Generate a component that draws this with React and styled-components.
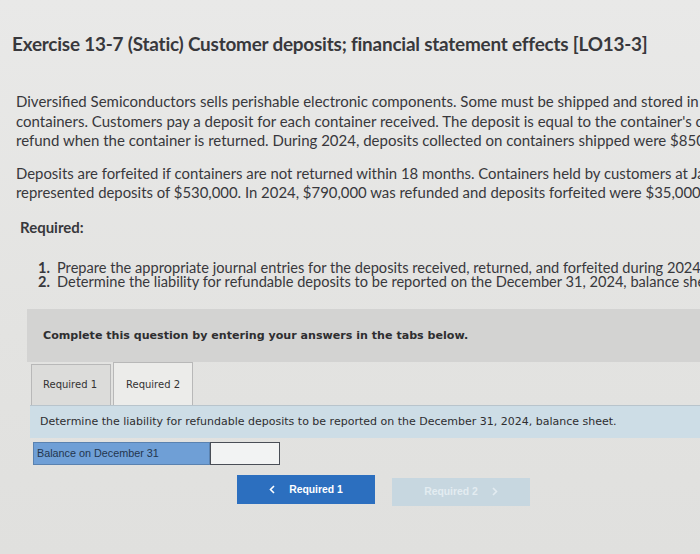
import React from "react";
import styled, { createGlobalStyle } from "styled-components";

const GlobalStyle = createGlobalStyle`
  html, body {
    margin: 0;
    padding: 0;
    width: 700px;
    height: 554px;
    overflow: hidden;
    background: #e4e4e2;
  }
`;

const Page = styled.div`
  width: 700px;
  height: 554px;
  overflow: hidden;
  background: linear-gradient(180deg, #e9e9e8 0%, #e3e3e1 60%, #e0e0de 100%);
  color: #38383c;
  font-family: Lato, "Liberation Sans", sans-serif;
  padding-top: 31px;
  box-sizing: border-box;
`;

const Title = styled.h1`
  margin: 0 0 0 12px;
  font-size: 18.9px;
  line-height: 26px;
  font-weight: 700;
  white-space: nowrap;
  letter-spacing: -0.2px;
`;

const Paragraph = styled.div`
  margin: ${(p) => p.$top}px 0 0 16px;
  font-size: ${(p) => p.$size}px;
  line-height: 19.5px;
`;

const Line = styled.div`
  white-space: nowrap;
`;

const Required = styled.div`
  margin: 15px 0 0 20px;
  font-size: 15px;
  line-height: 19px;
  font-weight: 700;
`;

const List = styled.ol`
  margin: 24px 0 0 0;
  padding: 0 0 0 38px;
  list-style: none;
  font-size: 14.6px;
  line-height: 14.5px;
`;

const Item = styled.li`
  display: flex;
  white-space: nowrap;
`;

const Num = styled.span`
  width: 19px;
  font-weight: 700;
  flex: none;
`;

const Panel = styled.div`
  margin: 19px 0 0 27px;
  font-family: "DejaVu Sans", Verdana, sans-serif;
`;

const Banner = styled.div`
  height: 53px;
  background: #d3d3d2;
  display: flex;
  align-items: center;
  padding-left: 16px;
  font-size: 11.1px;
  font-weight: 700;
  color: #2e2e30;
`;

const Tabs = styled.div`
  display: flex;
  gap: 2px;
  padding-left: 4px;
  height: 43px;
  align-items: flex-end;
`;

const Tab = styled.div`
  width: 80px;
  height: ${(p) => (p.$active ? 43 : 41)}px;
  box-sizing: border-box;
  border: 1px solid #b8b8b8;
  border-bottom: none;
  background: ${(p) => (p.$active ? "#ececea" : "#dcdcda")};
  display: flex;
  align-items: center;
  padding-left: ${(p) => (p.$active ? 12 : 11)}px;
  padding-top: ${(p) => (p.$active ? 2 : 0)}px;
  font-size: 10px;
  color: #333;
`;

const Prompt = styled.div`
  margin-left: 3px;
  height: 32px;
  background: #cddde6;
  border-top: 1px solid #b8c4cc;
  display: flex;
  align-items: center;
  padding-left: 10px;
  font-size: 11px;
  color: #2e2e30;
  white-space: nowrap;
`;

const AnswerRow = styled.div`
  display: flex;
  margin: 4px 0 0 6px;
  height: 23px;
`;

const Label = styled.div`
  width: 177px;
  box-sizing: border-box;
  background: #6f9fd6;
  border: 1px solid #5a82b0;
  display: flex;
  align-items: center;
  padding-left: 3px;
  font-family: "Liberation Sans", Arial, sans-serif;
  font-size: 10.8px;
  color: #23364e;
`;

const Input = styled.input`
  width: 70px;
  box-sizing: border-box;
  border: 1px solid #4a4e56;
  background: #f2f3f3;
  outline: none;
`;

const Nav = styled.div`
  display: flex;
  gap: 17px;
  margin: 10px 0 0 210px;
  align-items: flex-start;
`;

const NavButton = styled.button`
  width: 138px;
  height: ${(p) => (p.$disabled ? 28 : 29)}px;
  margin-top: ${(p) => (p.$disabled ? 3 : 0)}px;
  border: none;
  background: ${(p) => (p.$disabled ? "#c7d7e0" : "#2c6fbf")};
  color: ${(p) => (p.$disabled ? "#e3ecf1" : "#ffffff")};
  font-family: "Liberation Sans", Arial, sans-serif;
  font-size: 10.4px;
  font-weight: 700;
  display: flex;
  align-items: center;
  justify-content: center;
  gap: 14px;
  padding: 0;
`;

const Chevron = styled.svg`
  width: 6px;
  height: 9px;
`;

const ChevronLeft = () => (
  <Chevron viewBox="0 0 6 9">
    <path d="M5 1 L1.5 4.5 L5 8" fill="none" stroke="currentColor" strokeWidth="1.6" />
  </Chevron>
);

const ChevronRight = () => (
  <Chevron viewBox="0 0 6 9">
    <path d="M1 1 L4.5 4.5 L1 8" fill="none" stroke="currentColor" strokeWidth="1.6" />
  </Chevron>
);

const App = () => (
  <Page>
    <GlobalStyle />
    <Title>Exercise 13-7 (Static) Customer deposits; financial statement effects [LO13-3]</Title>
    <Paragraph $top={35} $size={15}>
      <Line>Diversified Semiconductors sells perishable electronic components. Some must be shipped and stored in reusable</Line>
      <Line>containers. Customers pay a deposit for each container received. The deposit is equal to the container's cost. A</Line>
      <Line>refund when the container is returned. During 2024, deposits collected on containers shipped were $850,000.</Line>
    </Paragraph>
    <Paragraph $top={13} $size={14.9}>
      <Line>Deposits are forfeited if containers are not returned within 18 months. Containers held by customers at January 1, 2024,</Line>
      <Line>represented deposits of $530,000. In 2024, $790,000 was refunded and deposits forfeited were $35,000.</Line>
    </Paragraph>
    <Required>Required:</Required>
    <List>
      <Item>
        <Num>1.</Num>
        Prepare the appropriate journal entries for the deposits received, returned, and forfeited during 2024.
      </Item>
      <Item>
        <Num>2.</Num>
        Determine the liability for refundable deposits to be reported on the December 31, 2024, balance sheet.
      </Item>
    </List>
    <Panel>
      <Banner>Complete this question by entering your answers in the tabs below.</Banner>
      <Tabs>
        <Tab>Required 1</Tab>
        <Tab $active>Required 2</Tab>
      </Tabs>
      <Prompt>Determine the liability for refundable deposits to be reported on the December 31, 2024, balance sheet.</Prompt>
      <AnswerRow>
        <Label>Balance on December 31</Label>
        <Input />
      </AnswerRow>
      <Nav>
        <NavButton>
          <ChevronLeft />
          Required 1
        </NavButton>
        <NavButton $disabled>
          Required 2
          <ChevronRight />
        </NavButton>
      </Nav>
    </Panel>
  </Page>
);

export default App;
